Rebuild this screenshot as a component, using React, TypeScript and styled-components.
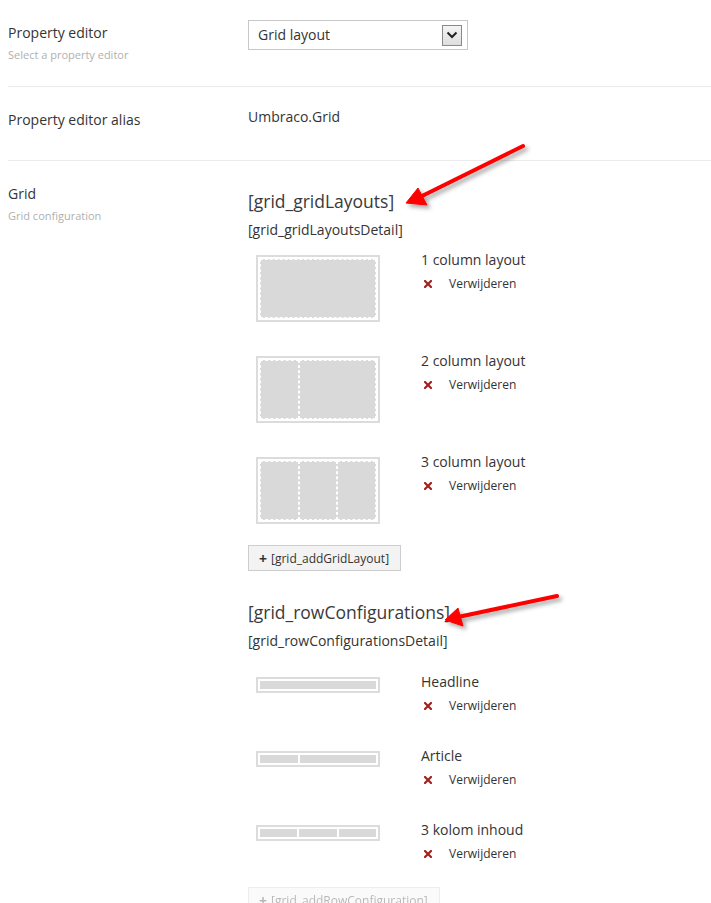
import React from 'react';
import styled, { createGlobalStyle } from 'styled-components';

const colors = {
  text: '#343434',
  muted: '#b0b0b0',
  line: '#ececec',
  thumbBorder: '#dcdcdc',
  cell: '#d9d9d9',
  danger: '#a3211e',
  arrow: '#f00',
};

const GlobalStyle = createGlobalStyle`
  html, body {
    margin: 0;
    background: #fff;
  }
  body {
    font-family: "Open Sans", "Liberation Sans", sans-serif;
    color: ${colors.text};
    overflow: hidden;
  }
`;

const Page = styled.div`
  position: relative;
  margin-left: 8px;
  width: 703px;
`;

const PropertyRow = styled.div<{ $bottom: number; $last?: boolean }>`
  display: grid;
  grid-template-columns: 240px 1fr;
  padding: 20px 0 ${(p) => p.$bottom}px;
  border-bottom: ${(p) => (p.$last ? 'none' : `1px solid ${colors.line}`)};
`;

const LabelCol = styled.div`
  padding-top: 3px;
`;

const Label = styled.div`
  font-size: 14px;
  line-height: 20px;
`;

const Description = styled.div`
  margin-top: 4px;
  font-size: 11px;
  line-height: 15px;
  color: ${colors.muted};
`;

const SelectBox = styled.div`
  display: flex;
  align-items: center;
  justify-content: space-between;
  box-sizing: border-box;
  width: 220px;
  height: 30px;
  padding: 0 5px 1px 9px;
  border: 1px solid #c8c8c8;
  font-size: 14px;
`;

const ArrowBox = styled.div`
  display: flex;
  align-items: center;
  justify-content: center;
  box-sizing: border-box;
  width: 20px;
  height: 21px;
  margin-top: 1px;
  border: 1px solid #8a8a8a;
  background: linear-gradient(#f4f4f4, #dedede);
`;

const Value = styled.div`
  font-size: 14px;
  line-height: 20px;
`;

const Heading = styled.div<{ $top: number }>`
  margin-top: ${(p) => p.$top}px;
  font-size: 17.5px;
  line-height: 22px;
  color: #3a3a3a;
`;

const Detail = styled.div`
  margin-top: 9px;
  font-size: 14px;
  line-height: 18px;
`;

const List = styled.div<{ $top: number; $gap: number }>`
  display: flex;
  flex-direction: column;
  gap: ${(p) => p.$gap}px;
  margin-top: ${(p) => p.$top}px;
`;

const Item = styled.div`
  display: flex;
  align-items: flex-start;
`;

const Thumb = styled.div<{ $height: number; $gap: number }>`
  display: flex;
  gap: ${(p) => p.$gap}px;
  box-sizing: border-box;
  width: 124px;
  height: ${(p) => p.$height}px;
  margin: 5px 0 0 8px;
  padding: 2px;
  border: 2px solid ${colors.thumbBorder};
  background: #fff;
`;

const Cell = styled.div<{ $grow: number; $dashed?: boolean }>`
  flex: ${(p) => p.$grow} 1 0;
  background: ${colors.cell};
  border: ${(p) => (p.$dashed ? '1px dashed #fff' : 'none')};
`;

const Info = styled.div`
  margin-left: 41px;
`;

const ItemName = styled.div`
  font-size: 14px;
  line-height: 20px;
`;

const RemoveLink = styled.div`
  display: flex;
  align-items: center;
  gap: 17px;
  margin-top: 6px;
  padding-left: 3px;
  font-size: 12px;
  line-height: 16px;
  color: #333;
`;

const AddButton = styled.button<{ $top: number; $disabled?: boolean }>`
  display: flex;
  align-items: center;
  gap: 4px;
  margin-top: ${(p) => p.$top}px;
  height: 26px;
  padding: 0 11px 0 10px;
  border: 1px solid #cdcdcd;
  background: #f3f3f3;
  font-family: inherit;
  font-size: 12px;
  color: #333;
  opacity: ${(p) => (p.$disabled ? 0.35 : 1)};

  b {
    font-size: 14px;
  }
`;

const ArrowLayer = styled.svg`
  position: absolute;
  left: -8px;
  top: 0;
  pointer-events: none;
`;

type Layout = { name: string; cols: number[] };

const gridLayouts: Layout[] = [
  { name: '1 column layout', cols: [1] },
  { name: '2 column layout', cols: [1, 2] },
  { name: '3 column layout', cols: [1, 1, 1] },
];

const rowConfigs: Layout[] = [
  { name: 'Headline', cols: [1] },
  { name: 'Article', cols: [1, 2] },
  { name: '3 kolom inhoud', cols: [1, 1, 1] },
];

const Cross = () => (
  <svg width="8" height="8" viewBox="0 0 8 8">
    <path d="M1 1 L7 7 M7 1 L1 7" stroke={colors.danger} strokeWidth="2.2" strokeLinecap="square" />
  </svg>
);

const Chevron = () => (
  <svg width="12" height="8" viewBox="0 0 12 8">
    <path d="M1.5 1.5 L6 6 L10.5 1.5" fill="none" stroke="#222" strokeWidth="2" />
  </svg>
);

const LayoutList = ({ items, tall, top, gap }: { items: Layout[]; tall: boolean; top: number; gap: number }) => (
  <List $top={top} $gap={gap}>
    {items.map((item) => (
      <Item key={item.name}>
        <Thumb $height={tall ? 67 : 16} $gap={tall ? 0 : 2}>
          {item.cols.map((c, i) => (
            <Cell key={i} $grow={c} $dashed={tall} />
          ))}
        </Thumb>
        <Info>
          <ItemName>{item.name}</ItemName>
          <RemoveLink>
            <Cross />
            Verwijderen
          </RemoveLink>
        </Info>
      </Item>
    ))}
  </List>
);

const Arrows = () => (
  <ArrowLayer width="711" height="903" viewBox="0 0 711 903">
    <defs>
      <filter id="shadow" x="-20%" y="-20%" width="140%" height="160%">
        <feDropShadow dx="3" dy="3" stdDeviation="2" floodColor="#000" floodOpacity="0.35" />
      </filter>
    </defs>
    <g filter="url(#shadow)" fill={colors.arrow} stroke={colors.arrow}>
      <line x1="523" y1="146" x2="418" y2="198" strokeWidth="4" strokeLinecap="round" />
      <polygon points="406,203 418,188 427,205" strokeWidth="1" />
      <line x1="557" y1="596" x2="458" y2="617" strokeWidth="4" strokeLinecap="round" />
      <polygon points="445,620 458,608 463,626" strokeWidth="1" />
    </g>
  </ArrowLayer>
);

export default function App() {
  return (
    <>
      <GlobalStyle />
      <Page>
        <PropertyRow $bottom={24}>
          <LabelCol>
            <Label>Property editor</Label>
            <Description>Select a property editor</Description>
          </LabelCol>
          <div>
            <SelectBox>
              Grid layout
              <ArrowBox>
                <Chevron />
              </ArrowBox>
            </SelectBox>
          </div>
        </PropertyRow>

        <PropertyRow $bottom={30}>
          <LabelCol>
            <Label>Property editor alias</Label>
          </LabelCol>
          <Value>Umbraco.Grid</Value>
        </PropertyRow>

        <PropertyRow $bottom={40} $last>
          <LabelCol>
            <Label>Grid</Label>
            <Description>Grid configuration</Description>
          </LabelCol>
          <div>
            <Heading $top={9}>[grid_gridLayouts]</Heading>
            <Detail>[grid_gridLayoutsDetail]</Detail>
            <LayoutList items={gridLayouts} tall top={11} gap={29} />
            <AddButton $top={21}>
              <b>+</b> [grid_addGridLayout]
            </AddButton>

            <Heading $top={30}>[grid_rowConfigurations]</Heading>
            <Detail>[grid_rowConfigurationsDetail]</Detail>
            <LayoutList items={rowConfigs} tall={false} top={22} gap={32} />
            <AddButton $top={25} $disabled>
              <b>+</b> [grid_addRowConfiguration]
            </AddButton>
          </div>
        </PropertyRow>
        <Arrows />
      </Page>
    </>
  );
}
